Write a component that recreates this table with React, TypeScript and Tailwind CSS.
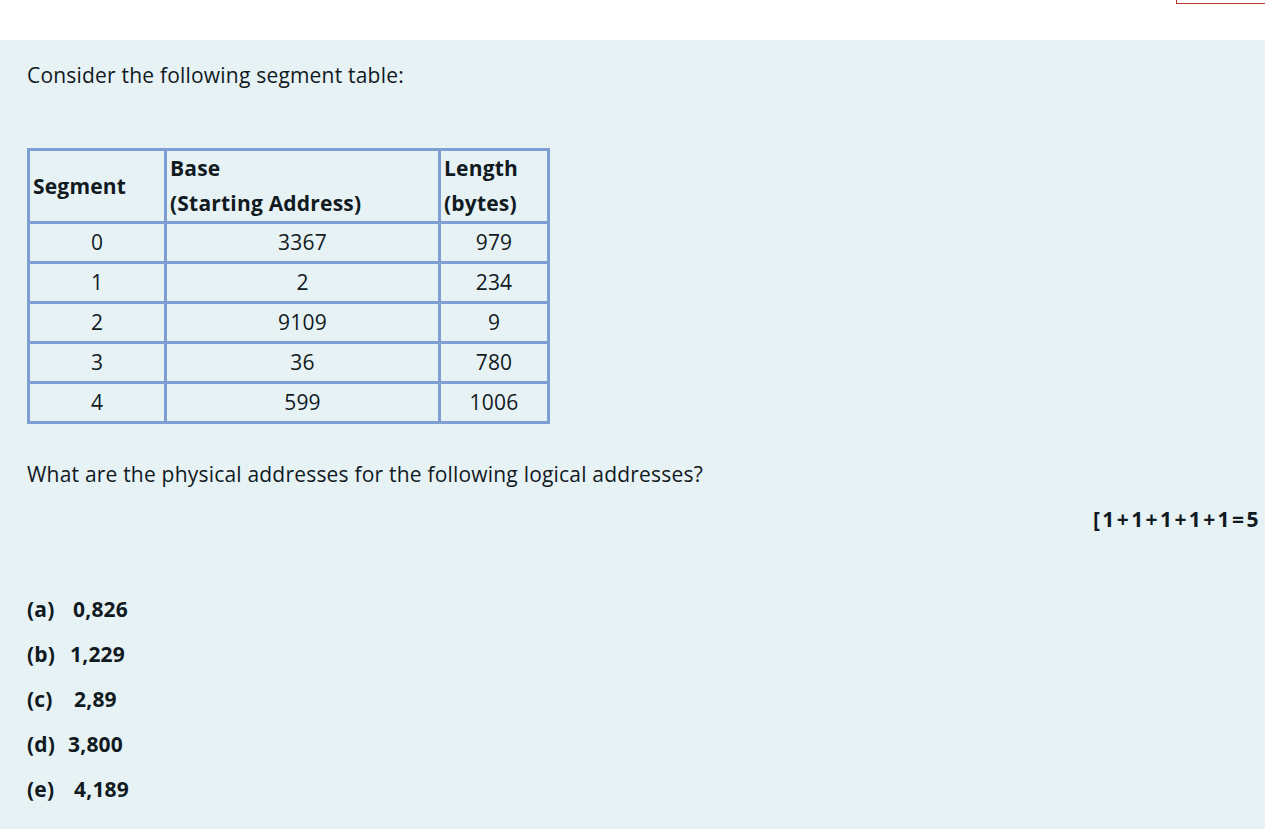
const rows: [string, string, string][] = [
  ["0", "3367", "979"],
  ["1", "2", "234"],
  ["2", "9109", "9"],
  ["3", "36", "780"],
  ["4", "599", "1006"],
];

// value x offsets follow the reference's uneven spacing after each label
const parts = [
  ["(a)", "0,826", "ml-[19px]"],
  ["(b)", "1,229", "ml-[16px]"],
  ["(c)", "2,89", "ml-[20px]"],
  ["(d)", "3,800", "ml-[14px]"],
  ["(e)", "4,189", "ml-[20px]"],
];

const cell = "border-[3px] border-[#7f9fd4] px-[3px]";

export default function App() {
  return (
    <div
      className="min-h-[829px] w-[1265px] overflow-hidden bg-white text-[#111a1f] tracking-[0.2px]"
      style={{ fontFamily: '"Open Sans", "Noto Sans", sans-serif' }}
    >
      <div className="flex h-[40px] justify-end">
        <div className="h-[4px] w-[89px] border-b border-l border-[#b8332a]" />
      </div>

      <div className="min-h-[789px] bg-[#e7f2f5] pl-[27px] pt-[21px]">
        <p className="text-[21px] leading-[28px]">Consider the following segment table:</p>

        <table className="mt-[59px] border-collapse border-[3px] border-[#7f9fd4] text-[21px]">
          <thead>
            <tr className="font-bold">
              <th className={`w-[137px] ${cell} py-0 text-left leading-[35px]`}>Segment</th>
              <th className={`w-[274px] ${cell} py-0 text-left leading-[35px]`}>
                Base
                <br />
                (Starting Address)
              </th>
              <th className={`w-[109px] ${cell} py-0 text-left leading-[35px]`}>
                Length
                <br />
                (bytes)
              </th>
            </tr>
          </thead>
          <tbody>
            {rows.map((r) => (
              <tr key={r[0]}>
                {r.map((c, i) => (
                  <td key={i} className={`${cell} py-[1px] text-center leading-[35px]`}>
                    {c}
                  </td>
                ))}
              </tr>
            ))}
          </tbody>
        </table>

        <p className="mt-[36px] text-[21px] leading-[28px]">
          What are the physical addresses for the following logical addresses?
        </p>

        <div className="mt-[17px] flex overflow-hidden whitespace-nowrap">
          <p className="ml-[1066px] shrink-0 text-[21px] font-bold leading-[28px] tracking-[2.4px]">
            [1+1+1+1+1=5 Marks]
          </p>
        </div>

        <ul className="mt-[62px] flex flex-col gap-[17px] text-[21px] font-bold leading-[28px]">
          {parts.map(([k, v, gap]) => (
            <li key={k} className="flex">
              <span className="w-[27px]">{k}</span>
              <span className={gap}>{v}</span>
            </li>
          ))}
        </ul>
      </div>
    </div>
  );
}
